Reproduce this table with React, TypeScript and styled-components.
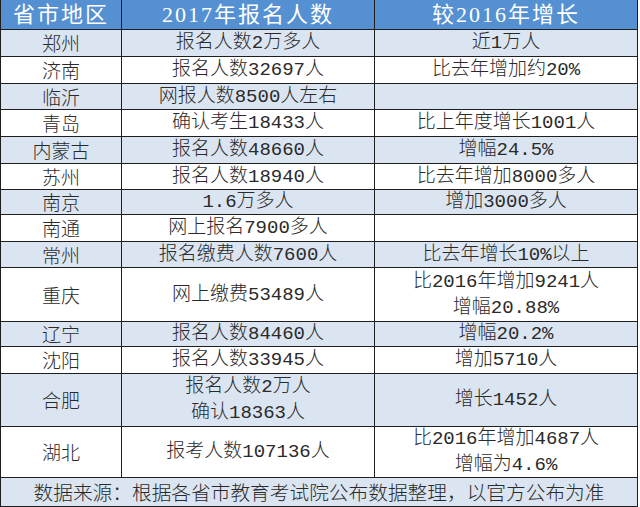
import React from "react";
import styled, { createGlobalStyle } from "styled-components";

const Global = createGlobalStyle`
  html, body { margin: 0; padding: 0; background: #ffffff; }
  #root { width: 640px; height: 507px; overflow: hidden; }
`;

const Table = styled.div`
  display: grid;
  grid-template-columns: 120px 252px 262px;
  gap: 1px;
  padding: 0 1px 1px 1px;
  width: fit-content;
  background: #1e1e1e;
`;

const HeadCell = styled.div`
  height: 29px;
  background: #5590d3;
  color: #ffffff;
  display: flex;
  align-items: center;
  justify-content: center;
  font-family: "Liberation Serif", "Noto Sans CJK SC", serif;
  font-size: 22px;
  letter-spacing: 2px;
  line-height: 1;
`;

const Cell = styled.div<{ $h: number; $alt: boolean }>`
  height: ${(p) => p.$h}px;
  background: ${(p) => (p.$alt ? "#dbe5f1" : "#ffffff")};
  color: #2a2a2a;
  display: flex;
  flex-direction: column;
  align-items: center;
  justify-content: center;
  font-family: "Liberation Mono", "Noto Sans CJK SC", monospace;
  font-size: 19px;
  font-weight: 300;
  line-height: 26px;
  white-space: nowrap;
`;

const CityCell = styled(Cell)`
  font-family: "Noto Sans CJK SC", sans-serif;
`;

const Footer = styled.div`
  grid-column: 1 / span 3;
  height: 28px;
  background: #dbe5f1;
  color: #2a2a2a;
  display: flex;
  align-items: center;
  justify-content: center;
  font-family: "Noto Sans CJK SC", sans-serif;
  font-size: 19.7px;
  font-weight: 300;
  line-height: 1;
  white-space: nowrap;
`;

type Row = { city: string; count: string[]; growth: string[]; h: number };

const rows: Row[] = [
  { city: "郑州", count: ["报名人数2万多人"], growth: ["近1万人"], h: 26 },
  { city: "济南", count: ["报名人数32697人"], growth: ["比去年增加约20%"], h: 26 },
  { city: "临沂", count: ["网报人数8500人左右"], growth: [], h: 25 },
  { city: "青岛", count: ["确认考生18433人"], growth: ["比上年度增长1001人"], h: 26 },
  { city: "内蒙古", count: ["报名人数48660人"], growth: ["增幅24.5%"], h: 26 },
  { city: "苏州", count: ["报名人数18940人"], growth: ["比去年增加8000多人"], h: 25 },
  { city: "南京", count: ["1.6万多人"], growth: ["增加3000多人"], h: 24 },
  { city: "南通", count: ["网上报名7900多人"], growth: [], h: 26 },
  { city: "常州", count: ["报名缴费人数7600人"], growth: ["比去年增长10%以上"], h: 25 },
  { city: "重庆", count: ["网上缴费53489人"], growth: ["比2016年增加9241人", "增幅20.88%"], h: 53 },
  { city: "辽宁", count: ["报名人数84460人"], growth: ["增幅20.2%"], h: 24 },
  { city: "沈阳", count: ["报名人数33945人"], growth: ["增加5710人"], h: 26 },
  { city: "合肥", count: ["报名人数2万人", "确认18363人"], growth: ["增长1452人"], h: 52 },
  { city: "湖北", count: ["报考人数107136人"], growth: ["比2016年增加4687人", "增幅为4.6%"], h: 50 },
];

export default function App() {
  return (
    <>
      <Global />
      <Table>
        <HeadCell>省市地区</HeadCell>
        <HeadCell>2017年报名人数</HeadCell>
        <HeadCell>较2016年增长</HeadCell>
        {rows.map((r, i) => {
          const alt = i % 2 === 0;
          return (
            <React.Fragment key={r.city}>
              <CityCell $h={r.h} $alt={alt}>{r.city}</CityCell>
              <Cell $h={r.h} $alt={alt}>
                {r.count.map((t) => (
                  <span key={t}>{t}</span>
                ))}
              </Cell>
              <Cell $h={r.h} $alt={alt}>
                {r.growth.map((t) => (
                  <span key={t}>{t}</span>
                ))}
              </Cell>
            </React.Fragment>
          );
        })}
        <Footer>数据来源：根据各省市教育考试院公布数据整理，以官方公布为准</Footer>
      </Table>
    </>
  );
}
